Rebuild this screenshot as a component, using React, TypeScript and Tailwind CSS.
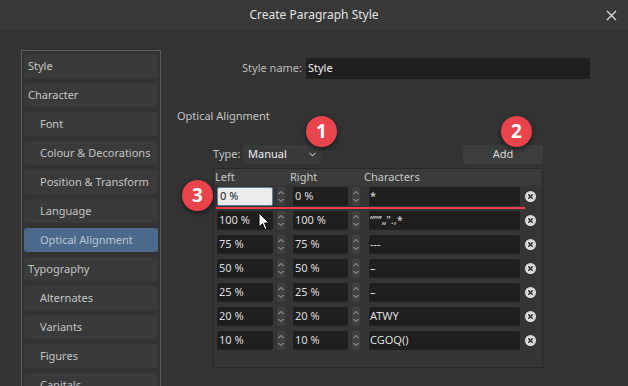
import React from "react";

const navItems: { label: string; sub?: boolean; active?: boolean }[] = [
  { label: "Style" },
  { label: "Character" },
  { label: "Font", sub: true },
  { label: "Colour & Decorations", sub: true },
  { label: "Position & Transform", sub: true },
  { label: "Language", sub: true },
  { label: "Optical Alignment", sub: true, active: true },
  { label: "Typography" },
  { label: "Alternates", sub: true },
  { label: "Variants", sub: true },
  { label: "Figures", sub: true },
  { label: "Capitals", sub: true },
];

const rows = [
  { left: "0 %", right: "0 %", chars: "*" },
  { left: "100 %", right: "100 %", chars: "\u201C\u201D\u2018\u2019\u201E\".,*" },
  { left: "75 %", right: "75 %", chars: "---" },
  { left: "50 %", right: "50 %", chars: "\u2013" },
  { left: "25 %", right: "25 %", chars: "\u2013" },
  { left: "20 %", right: "20 %", chars: "ATWY" },
  { left: "10 %", right: "10 %", chars: "CGOQ()" },
];

function Spinner() {
  return (
    <div className="w-[8px] h-[19px] rounded-[2px] bg-[#404040] flex items-center justify-center">
      <svg width="8" height="15" viewBox="0 0 8 15" fill="none" stroke="#b5b5b5" strokeWidth="1">
        <path d="M1.5 5 L4 2.5 L6.5 5" />
        <path d="M1.5 10 L4 12.5 L6.5 10" />
      </svg>
    </div>
  );
}

function RemoveIcon() {
  return (
    <svg width="11" height="11" viewBox="0 0 11 11">
      <circle cx="5.5" cy="5.5" r="5.5" fill="#dcdcdc" />
      <path d="M3.3 3.3 L7.7 7.7 M7.7 3.3 L3.3 7.7" stroke="#2a2a2a" strokeWidth="1.4" />
    </svg>
  );
}

function Badge({ n, className }: { n: string; className: string }) {
  return (
    <div
      className={`absolute w-[31px] h-[31px] rounded-full bg-[#e9434b] text-white font-bold text-[19px] flex items-center justify-center shadow-[0_2px_5px_rgba(0,0,0,0.55)] ${className}`}
    >
      {n}
    </div>
  );
}

export default function App() {
  return (
    <div
      className="relative w-[628px] h-[386px] overflow-hidden bg-[#333333] text-[#c4c4c4] text-[11px]"
      style={{ fontFamily: '"Noto Sans", "Open Sans", sans-serif' }}
    >
      {/* Title bar */}
      <div className="h-[30px] bg-[#383838] flex items-center justify-center relative">
        <span className="text-[12px] text-[#e2e2e2]">Create Paragraph Style</span>
        <svg className="absolute right-[11px] top-[10px]" width="11" height="11" viewBox="0 0 11 11" stroke="#d8d8d8" strokeWidth="1.4">
          <path d="M1 1 L10 10 M10 1 L1 10" />
        </svg>
      </div>

      <div className="flex">
        {/* Sidebar */}
        <div className="ml-[21px] mt-[20px] w-[140px] h-[400px] border border-[#5a5a5a] p-[2px] pt-[3px] flex flex-col gap-[5px]">
          {navItems.map((it) => (
            <div
              key={it.label}
              className={`h-[24px] shrink-0 rounded-[3px] flex items-center ${it.sub ? "pl-[16px]" : "pl-[4px]"} ${
                it.active ? "bg-[#4b6a8b] text-[#b9c6d4]" : "bg-[#3a3a3a]"
              }`}
            >
              {it.label}
            </div>
          ))}
        </div>

        {/* Content */}
        <div className="flex-1 flex flex-col">
          <div className="mt-[28px] flex items-center">
            <span className="w-[141px] text-right text-[#bdbdbd]">Style name:</span>
            <div className="ml-[4px] w-[284px] h-[21px] bg-[#1f1f1f] rounded-[2px] flex items-center pl-[2px] text-[#f0f0f0]">
              Style
            </div>
          </div>

          <div className="mt-[29px] ml-[16px] h-[16px] flex items-center">Optical Alignment</div>

          <div className="ml-[52px] w-[330px] flex flex-col">
            <div className="mt-[21px] h-[19px] flex items-center">
              <span className="w-[30px]">Type:</span>
              <div className="w-[78px] h-[19px] bg-[#3a3a3a] rounded-[2px] flex items-center pl-[5px] pr-[5px] text-[#ececec]">
                <span className="flex-1">Manual</span>
                <svg width="7" height="5" viewBox="0 0 7 5" fill="none" stroke="#b5b5b5" strokeWidth="1.1">
                  <path d="M0.5 0.8 L3.5 3.8 L6.5 0.8" />
                </svg>
              </div>
              <div className="ml-auto w-[80px] h-[19px] bg-[#3d3d3d] rounded-[2px] flex items-center justify-center text-[#d6d6d6]">
                Add
              </div>
            </div>

            {/* Table */}
            <div className="mt-[4px] h-[200px] border border-[#282828] bg-[#353535] flex flex-col">
              <div className="h-[16px] bg-[#3b3b3b] flex items-center text-[#c8c8c8]">
                <span className="ml-[1px] w-[75px]">Left</span>
                <span className="w-[74px]">Right</span>
                <span>Characters</span>
              </div>
              <div className="pt-[2px] flex flex-col gap-[5px]">
                {rows.map((r, i) => (
                  <div key={i} className="relative h-[19px] flex items-center text-[#dedede]">
                    <div
                      className={`ml-[3px] w-[56px] h-[19px] rounded-[2px] flex items-center pl-[2px] ${
                        i === 0 ? "bg-[#ececec] border border-[#5b7ea6] text-[#222] pl-[1px]" : "bg-[#1f1f1f]"
                      }`}
                    >
                      {r.left}
                    </div>
                    <div className="ml-[4px]">
                      <Spinner />
                    </div>
                    <div className="ml-[8px] w-[55px] h-[19px] rounded-[2px] bg-[#1f1f1f] flex items-center pl-[2px]">
                      {r.right}
                    </div>
                    <div className="ml-[4px]">
                      <Spinner />
                    </div>
                    <div className="ml-[9px] w-[151px] h-[19px] rounded-[2px] bg-[#1f1f1f] flex items-center pl-[1px] overflow-hidden whitespace-nowrap">
                      {r.chars}
                    </div>
                    <div className="ml-[5px]">
                      <RemoveIcon />
                    </div>
                    {i === 0 && <div className="absolute left-[2px] top-[20px] w-[309px] h-[2px] bg-[#e5404a]" />}
                  </div>
                ))}
              </div>
            </div>
          </div>
        </div>
      </div>

      <Badge n="1" className="left-[306px] top-[116px]" />
      <Badge n="2" className="left-[501px] top-[116px]" />
      <Badge n="3" className="left-[182px] top-[180px]" />

      {/* Mouse cursor */}
      <svg className="absolute left-[258px] top-[212px]" width="12" height="19" viewBox="0 0 12 19">
        <path d="M1 1 L1 15 L4.5 11.8 L7 17.5 L9 16.6 L6.6 11 L11 11 Z" fill="#ffffff" stroke="#000000" strokeWidth="1" strokeLinejoin="round" />
      </svg>
    </div>
  );
}
